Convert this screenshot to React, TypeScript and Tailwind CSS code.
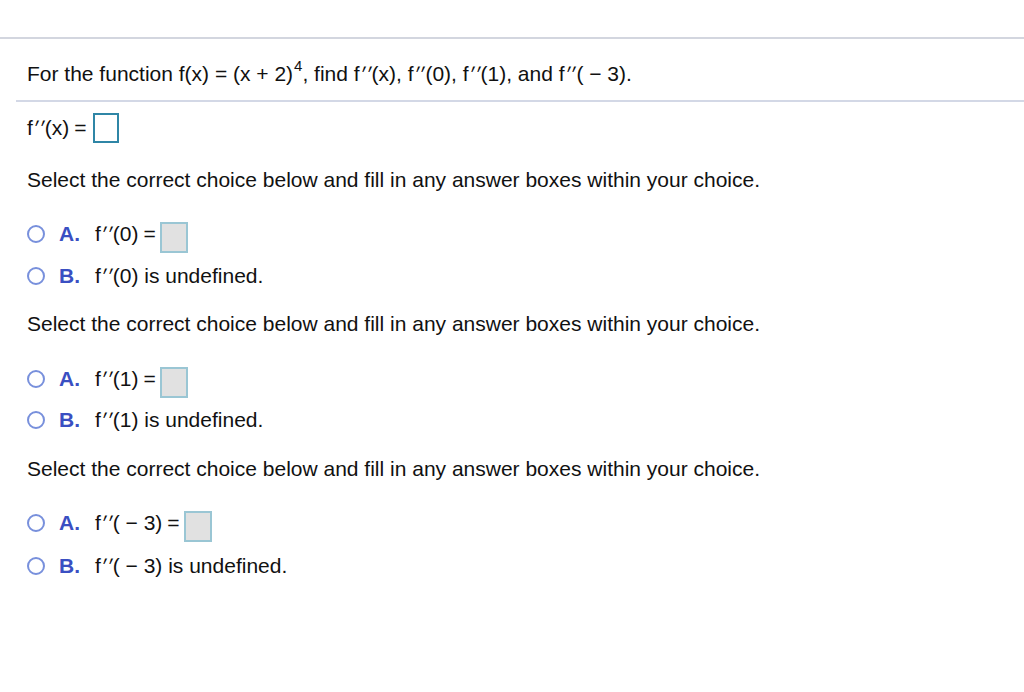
import React from "react";

const font = { fontFamily: '"Liberation Sans", Arial, Helvetica, sans-serif' };

function Fpp() {
  return (
    <span className="inline-flex">
      f<span className="ml-[1px] inline-block skew-x-[-12deg]">′</span>
      <span className="ml-[2px] mr-[1px] inline-block skew-x-[-12deg]">′</span>
    </span>
  );
}

function Radio() {
  return (
    <span className="inline-block w-[18px] h-[18px] rounded-full border-[2px] border-[#7890dc] bg-white shrink-0" />
  );
}

function Box({ filled = false }: { filled?: boolean }) {
  return filled ? (
    <span className="inline-block w-[28px] h-[31px] border-[2px] border-[#9ac6d4] bg-[#e1e1e1] shrink-0" />
  ) : (
    <span className="inline-block w-[26px] h-[30px] border-[2px] border-[#2f86a6] bg-white shrink-0" />
  );
}

function Label({ l }: { l: string }) {
  return (
    <>
      <div className="w-[18px] flex justify-center ml-[7px]">
        <Radio />
      </div>
      <span className="ml-[14px] w-[36px] font-bold text-[#3a4fc2]">{l}</span>
    </>
  );
}

function ChoiceA({ arg, mt }: { arg: React.ReactNode; mt: string }) {
  return (
    <div className={`flex items-start h-[31px] ${mt}`}>
      <div className="flex items-center h-[24px]">
        <Label l="A." />
        <Fpp />
        <span>({arg})</span>
        <span className="ml-[5px] mr-[4px]">=</span>
      </div>
      <Box filled />
    </div>
  );
}

function ChoiceB({ arg, mt }: { arg: React.ReactNode; mt: string }) {
  return (
    <div className={`flex items-center h-[24px] ${mt}`}>
      <Label l="B." />
      <Fpp />
      <span>({arg}) is undefined.</span>
    </div>
  );
}

function Select({ mt }: { mt: string }) {
  return (
    <div className={`h-[24px] leading-[24px] pl-[27px] ${mt}`}>
      Select the correct choice below and fill in any answer boxes within your choice.
    </div>
  );
}

export default function App() {
  return (
    <div
      className="w-[1024px] h-[692px] bg-white text-[21px] leading-[24px] text-[#111] overflow-hidden"
      style={font}
    >
      <div className="h-[37px]" />
      <div className="h-[2px] bg-[#d3d6df]" />
      <div className="pt-[23px] pl-[27px] h-[61px]">
        <div className="flex items-center h-[24px]">
          <span>For the function f(x) = (x + 2)</span>
          <span className="text-[15px] leading-[15px] self-start -mt-[4px] ml-[1px]">4</span>
          <span>, find&nbsp;</span>
          <Fpp />
          <span>(x),&nbsp;</span>
          <Fpp />
          <span>(0),&nbsp;</span>
          <Fpp />
          <span>(1), and&nbsp;</span>
          <Fpp />
          <span>( − 3).</span>
        </div>
      </div>
      <div className="ml-[16px] h-[2px] bg-[#d3d8e6]" />
      <div className="flex items-center h-[30px] mt-[11px] pl-[27px]">
        <Fpp />
        <span>(x)</span>
        <span className="ml-[5px] mr-[7px]">=</span>
        <Box />
      </div>
      <Select mt="mt-[25px]" />
      <div className="pl-[20px]">
        <ChoiceA arg="0" mt="mt-[30px]" />
        <ChoiceB arg="0" mt="mt-[11px]" />
      </div>
      <Select mt="mt-[24px]" />
      <div className="pl-[20px]">
        <ChoiceA arg="1" mt="mt-[31px]" />
        <ChoiceB arg="1" mt="mt-[10px]" />
      </div>
      <Select mt="mt-[25px]" />
      <div className="pl-[20px]">
        <ChoiceA arg=" − 3" mt="mt-[30px]" />
        <ChoiceB arg=" − 3" mt="mt-[12px]" />
      </div>
    </div>
  );
}
